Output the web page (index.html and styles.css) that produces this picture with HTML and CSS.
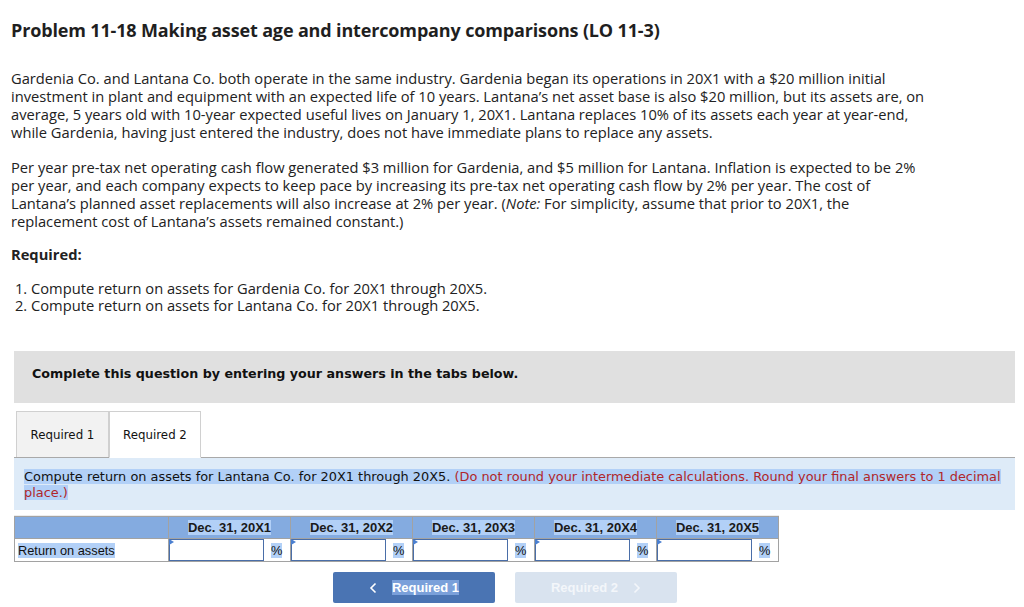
FILE: index.html
```html
<!DOCTYPE html>
<html>
<head>
<meta charset="utf-8">
<link rel="stylesheet" href="styles.css">
</head>
<body>
<h1 class="title">Problem 11-18 Making asset age and intercompany comparisons (LO 11-3)</h1>
<p class="para">Gardenia Co. and Lantana Co. both operate in the same industry. Gardenia began its operations in 20X1 with a $20 million initial<br>investment in plant and equipment with an expected life of 10 years. Lantana’s net asset base is also $20 million, but its assets are, on<br>average, 5 years old with 10-year expected useful lives on January 1, 20X1. Lantana replaces 10% of its assets each year at year-end,<br>while Gardenia, having just entered the industry, does not have immediate plans to replace any assets.</p>
<p class="para">Per year pre-tax net operating cash flow generated $3 million for Gardenia, and $5 million for Lantana. Inflation is expected to be 2%<br>per year, and each company expects to keep pace by increasing its pre-tax net operating cash flow by 2% per year. The cost of<br>Lantana’s planned asset replacements will also increase at 2% per year. (<i>Note:</i> For simplicity, assume that prior to 20X1, the<br>replacement cost of Lantana’s assets remained constant.)</p>
<p class="req-head">Required:</p>
<ol class="req-list">
<li>Compute return on assets for Gardenia Co. for 20X1 through 20X5.</li>
<li>Compute return on assets for Lantana Co. for 20X1 through 20X5.</li>
</ol>

<div class="question">
  <div class="banner">Complete this question by entering your answers in the tabs below.</div>
  <div class="tabs">
    <div class="tab tab-off">Required 1</div>
    <div class="tab tab-on">Required 2</div>
  </div>
  <div class="instr"><span class="sel">Compute return on assets for Lantana Co. for 20X1 through 20X5. </span><span class="sel red">(Do not round your intermediate calculations. Round your final answers to 1 decimal place.)</span></div>

  <div class="table-wrap">
  <table class="grid">
    <tr class="head">
      <th class="lbl"></th>
      <th><span class="sel">Dec. 31, 20X1</span></th>
      <th><span class="sel">Dec. 31, 20X2</span></th>
      <th><span class="sel">Dec. 31, 20X3</span></th>
      <th><span class="sel">Dec. 31, 20X4</span></th>
      <th><span class="sel">Dec. 31, 20X5</span></th>
    </tr>
    <tr class="row">
      <td class="lbl"><span class="sel">Return on assets</span></td>
      <td><div class="cell"><span class="inp"></span><span class="pct sel">%</span></div></td>
      <td><div class="cell"><span class="inp"></span><span class="pct sel">%</span></div></td>
      <td><div class="cell"><span class="inp"></span><span class="pct sel">%</span></div></td>
      <td><div class="cell"><span class="inp"></span><span class="pct sel">%</span></div></td>
      <td><div class="cell"><span class="inp"></span><span class="pct sel">%</span></div></td>
    </tr>
  </table>
  </div>

  <div class="nav">
    <div class="btn btn-prev"><svg class="chev chev-l" width="8" height="12" viewBox="0 0 8 12"><polyline points="6.5,1.5 2,6 6.5,10.5" fill="none" stroke="#ffffff" stroke-width="1.6"/></svg><span class="btn-sel">Required 1</span></div>
    <div class="btn btn-next"><span>Required 2</span><svg class="chev chev-r" width="8" height="12" viewBox="0 0 8 12"><polyline points="1.5,1.5 6,6 1.5,10.5" fill="none" stroke="#f3f6fa" stroke-width="1.6"/></svg></div>
  </div>
</div>
</body>
</html>
```

FILE: styles.css
```css
html, body {
  margin: 0;
  padding: 0;
  background: #ffffff;
}
body {
  padding: 0 9px 0 11px;
  font-family: "Open Sans", "Liberation Sans", sans-serif;
  color: #222222;
}
.title {
  margin: 0;
  padding-top: 19px;
  font-size: 18px;
  line-height: 22px;
  font-weight: 700;
  color: #1f1f1f;
  letter-spacing: -0.15px;
}
.para {
  margin: 28px 0 0 0;
  font-size: 14.7px;
  line-height: 18px;
  white-space: nowrap;
}
.para + .para {
  margin-top: 17px;
}
.req-head {
  margin: 15px 0 0 0;
  font-size: 14.7px;
  line-height: 18px;
  font-weight: 700;
}
.req-list {
  margin: 17px 0 0 0;
  padding-left: 20px;
  font-size: 14.7px;
  line-height: 17px;
}
.question {
  margin: 37px 0 0 3px;
  width: 1001px;
  font-family: "DejaVu Sans", Verdana, sans-serif;
}
.banner {
  height: 52px;
  background: #e0e0e0;
  padding: 15px 0 0 18px;
  font-size: 12.7px;
  line-height: 16px;
  font-weight: 700;
  color: #111111;
  box-sizing: border-box;
}
.tabs {
  display: flex;
  margin-top: 8px;
  padding-left: 2px;
  border-bottom: 1px solid #a9a9a9;
  height: 46px;
  box-sizing: content-box;
}
.tab {
  width: 92px;
  height: 46px;
  box-sizing: border-box;
  display: flex;
  align-items: center;
  justify-content: center;
  font-size: 11.8px;
  color: #111111;
}
.tab-off {
  background: #f2f2f2;
  border: 1px solid #d0d0d0;
  border-bottom: none;
  width: 93px;
}
.tab-on {
  background: #ffffff;
  border: 1px solid #d0d0d0;
  border-bottom: 1px solid #ffffff;
  margin-bottom: -1px;
  height: 47px;
}
.instr {
  background: #deebf8;
  padding: 11px 10px 8px 10px;
  font-size: 12.9px;
  line-height: 16px;
  color: #111111;
  height: 52px;
  box-sizing: border-box;
}
.sel {
  background: #b2d0f7;
}
.red {
  color: #b0262a;
}
.table-wrap {
  margin-top: 5px;
  border-top: 1px solid #ececec;
  width: 765px;
}
.grid {
  border-collapse: collapse;
  font-family: "Liberation Sans", Arial, sans-serif;
  font-size: 12px;
  color: #111111;
  width: 765px;
  table-layout: fixed;
}
.grid th, .grid td {
  border: 1px solid #a2a2a2;
  padding: 0;
}
.grid .lbl {
  width: 153px;
}
.head th {
  background: #84abe0;
  height: 21px;
  font-weight: 700;
  font-size: 13px;
  text-align: center;
  color: #1a1a1a;
}
.row td {
  height: 22px;
  background: #ffffff;
}
.row td.lbl {
  padding-left: 3px;
  font-size: 12.8px;
}
.cell {
  display: flex;
  align-items: center;
  height: 22px;
}
.inp {
  position: relative;
  width: 95px;
  height: 22px;
  box-sizing: border-box;
  border: 1px solid #4a6ea8;
  background: #ffffff;
}
.inp::before {
  content: "";
  position: absolute;
  left: -1px;
  top: -1px;
  width: 0;
  height: 0;
  border-left: 5px solid #4a7fd0;
  border-top: 3px solid transparent;
  border-bottom: 3px solid transparent;
}
.pct {
  margin-left: 7px;
  font-size: 12.8px;
}
.nav {
  display: flex;
  gap: 20px;
  margin-top: 10px;
  padding-left: 319px;
}
.btn {
  width: 162px;
  height: 31px;
  border-radius: 2px;
  display: flex;
  align-items: center;
  justify-content: center;
  font-family: "Liberation Sans", Arial, sans-serif;
  font-weight: 700;
  font-size: 13px;
  color: #ffffff;
}
.btn-prev {
  background: #4a74b3;
}
.chev-l {
  margin-right: 15px;
}
.btn-sel {
  background: #7aa0da;
}
.btn-next {
  background: #d9e3ef;
  color: #f3f6fa;
}
.chev-r {
  margin-left: 15px;
}
```
